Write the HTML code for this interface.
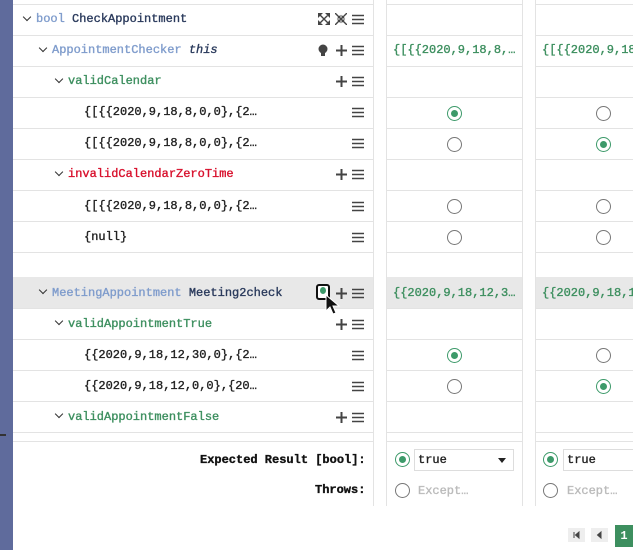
<!DOCTYPE html><html><head><style>
body{margin:0;width:633px;height:550px;background:#fff;position:relative;overflow:hidden;font-family:"Liberation Mono",monospace;font-size:12px;color:#222}
.a{position:absolute}
.h{position:absolute;height:1px;background:#e3e3e3}
.v{position:absolute;width:1px;background:#e3e3e3}
.t{position:absolute;line-height:14px;white-space:nowrap;-webkit-text-stroke:0.35px currentColor}
.r{position:absolute;width:15px;height:15px;border:1.3px solid #777;border-radius:50%;box-sizing:border-box}
.r.on{border-color:#3d9a6a}
.r.on:after{content:"";position:absolute;left:2.5px;top:2.5px;width:7.5px;height:7.5px;border-radius:50%;background:#3d9a6a}
.chev{position:absolute;width:5px;height:5px;border-right:1.6px solid #333;border-bottom:1.6px solid #333;transform:rotate(45deg)}
.g{color:#3d8f5f}.b{color:#7f9ccc}.n{color:#2a3a5c}.red{color:#d8102c}
svg.m,svg.p{position:absolute}
</style></head><body>
<div class="a" style="left:0;top:0;width:13px;height:550px;background:#5f6b9c"></div>
<div class="a" style="left:0;top:434px;width:6px;height:2px;background:#333"></div>
<div class="a" style="left:13px;top:277px;width:360px;height:31px;background:#e8e8e8"></div>
<div class="a" style="left:387px;top:277px;width:135px;height:31px;background:#e8e8e8"></div>
<div class="a" style="left:536px;top:277px;width:97px;height:31px;background:#e8e8e8"></div>
<div class="v" style="left:373px;top:0;height:506px"></div>
<div class="v" style="left:386px;top:0;height:506px"></div>
<div class="v" style="left:522px;top:0;height:506px"></div>
<div class="v" style="left:535px;top:0;height:506px"></div>
<div id="lines"></div>
<script>
var ys=[4,35,66,97,128,159,190,221,252,308,339,370,401,432,441];
var s='';ys.forEach(function(y){s+='<div class="h" style="left:13px;top:'+y+'px;width:360px"></div><div class="h" style="left:387px;top:'+y+'px;width:135px"></div><div class="h" style="left:536px;top:'+y+'px;width:97px"></div>'});
var ham=[19,50,81,112,143,174,206,237,293,324,355,386,417];
ham.forEach(function(y){s+='<svg class="m" style="left:352px;top:'+(y-5)+'px" width="12" height="11"><path d="M0 1.5H12M0 5.5H12M0 9.5H12" stroke="#444" stroke-width="1.6"/></svg>'});
[50,81,174,293,324,417].forEach(function(y){s+='<svg class="p" style="left:336px;top:'+(y-5)+'px" width="11" height="11"><path d="M5.5 0V11M0 5.5H11" stroke="#444" stroke-width="2"/></svg>'});
document.getElementById('lines').innerHTML=s;
</script>
<!-- left rows -->
<div class="chev" style="left:24px;top:14px"></div><div class="t" style="left:36px;top:12px"><span class="b">bool</span> <span class="n">CheckAppointment</span></div>
<div class="chev" style="left:40px;top:45px"></div><div class="t" style="left:52px;top:43px"><span class="b">AppointmentChecker</span> <i class="n">this</i></div>
<div class="chev" style="left:56px;top:76px"></div><div class="t g" style="left:68px;top:74px">validCalendar</div>
<div class="t" style="left:84px;top:105px">{[{{2020,9,18,8,0,0},{2…</div>
<div class="t" style="left:84px;top:136px">{[{{2020,9,18,8,0,0},{2…</div>
<div class="chev" style="left:56px;top:169px"></div><div class="t red" style="left:68px;top:167px">invalidCalendarZeroTime</div>
<div class="t" style="left:84px;top:199px">{[{{2020,9,18,8,0,0},{2…</div>
<div class="t" style="left:84px;top:230px">{null}</div>
<div class="chev" style="left:40px;top:287px"></div><div class="t" style="left:52px;top:286px"><span class="b">MeetingAppointment</span> <span class="n">Meeting2check</span></div>
<div class="chev" style="left:56px;top:318px"></div><div class="t g" style="left:68px;top:317px">validAppointmentTrue</div>
<div class="t" style="left:84px;top:348px">{{2020,9,18,12,30,0},{2…</div>
<div class="t" style="left:84px;top:379px">{{2020,9,18,12,0,0},{20…</div>
<div class="chev" style="left:56px;top:411px"></div><div class="t g" style="left:68px;top:410px">validAppointmentFalse</div>
<!-- expand/collapse icons -->
<svg class="a" style="left:318px;top:13px" width="12" height="12"><path d="M0 0L4 0L0 4Z M12 0L8 0L12 4Z M0 12L4 12L0 8Z M12 12L8 12L12 8Z M2 2L10 10M10 2L2 10" stroke="#444" stroke-width="1.4" fill="#444"/></svg>
<svg class="a" style="left:335px;top:13px" width="12" height="12"><path d="M0 0L10 10M12 0L2 10 M0 12L10 2 M12 12L2 2" stroke="#444" stroke-width="1.4"/><path d="M3 5L5 5L5 3Z M9 5L7 5L7 3Z M3 7L5 7L5 9Z M9 7L7 7L7 9Z" fill="#444" stroke="#444"/></svg>
<svg class="a" style="left:318px;top:44px" width="10" height="13"><circle cx="5" cy="5" r="4.5" fill="#444"/><rect x="3" y="9" width="4" height="3" fill="#444"/></svg>
<div class="a" style="left:316px;top:284px;width:14px;height:16px;border:2px solid #111;border-radius:3px;box-sizing:border-box;background:#fff"></div>
<div class="a" style="left:320px;top:287px;width:6px;height:7px;border-radius:50%;background:#3d9a6a"></div>
<svg class="a" style="left:325px;top:294px" width="20" height="24"><path d="M1 1 L1 17 L5 13 L8 20 L11 19 L8 12 L14 12 Z" fill="#111" stroke="#fff" stroke-width="1"/></svg>
<!-- columns -->
<div class="t g" style="left:393px;top:43px">{[{{2020,9,18,8,…</div>
<div class="t g" style="left:542px;top:43px">{[{{2020,9,18,8,0</div>
<div class="t g" style="left:393px;top:286px">{{2020,9,18,12,3…</div>
<div class="t g" style="left:542px;top:286px">{{2020,9,18,12,3</div>
<div class="r on" style="left:447px;top:106px"></div><div class="r" style="left:596px;top:106px"></div>
<div class="r" style="left:447px;top:137px"></div><div class="r on" style="left:596px;top:137px"></div>
<div class="r" style="left:447px;top:199px"></div><div class="r" style="left:596px;top:199px"></div>
<div class="r" style="left:447px;top:230px"></div><div class="r" style="left:596px;top:230px"></div>
<div class="r on" style="left:447px;top:348px"></div><div class="r" style="left:596px;top:348px"></div>
<div class="r" style="left:447px;top:379px"></div><div class="r on" style="left:596px;top:379px"></div>
<!-- bottom -->
<div class="t" style="left:200px;top:453px;font-weight:bold;color:#111">Expected Result [bool]:</div>
<div class="t" style="left:315px;top:483px;font-weight:bold;color:#111">Throws:</div>
<div class="r on" style="left:395px;top:452px"></div>
<div class="a" style="left:414px;top:449px;width:100px;height:22px;border:1px solid #ddd;box-sizing:border-box"></div>
<div class="t" style="left:418px;top:453px">true</div>
<div class="a" style="left:498px;top:458px;border-left:4px solid transparent;border-right:4px solid transparent;border-top:5px solid #222"></div>
<div class="r on" style="left:543px;top:452px"></div>
<div class="a" style="left:563px;top:449px;width:80px;height:22px;border:1px solid #ddd;box-sizing:border-box"></div>
<div class="t" style="left:567px;top:453px">true</div>
<div class="r" style="left:395px;top:483px"></div>
<div class="t" style="left:418px;top:484px;color:#bbb">Except…</div>
<div class="r" style="left:543px;top:483px"></div>
<div class="t" style="left:567px;top:484px;color:#bbb">Except…</div>
<div class="a" style="left:568px;top:528px;width:17px;height:14px;background:#eee"><svg width="17" height="14"><path d="M6 4V10M11 4L7.5 7L11 10Z" stroke="#444" fill="#444"/></svg></div>
<div class="a" style="left:591px;top:528px;width:17px;height:14px;background:#eee"><svg width="17" height="14"><path d="M10 4L6.5 7L10 10Z" stroke="#444" fill="#444"/></svg></div>
<div class="a" style="left:615px;top:525px;width:18px;height:22px;background:#3d8f5f;color:#fff;font-weight:bold;text-align:center;line-height:22px">1</div>
</body></html>
